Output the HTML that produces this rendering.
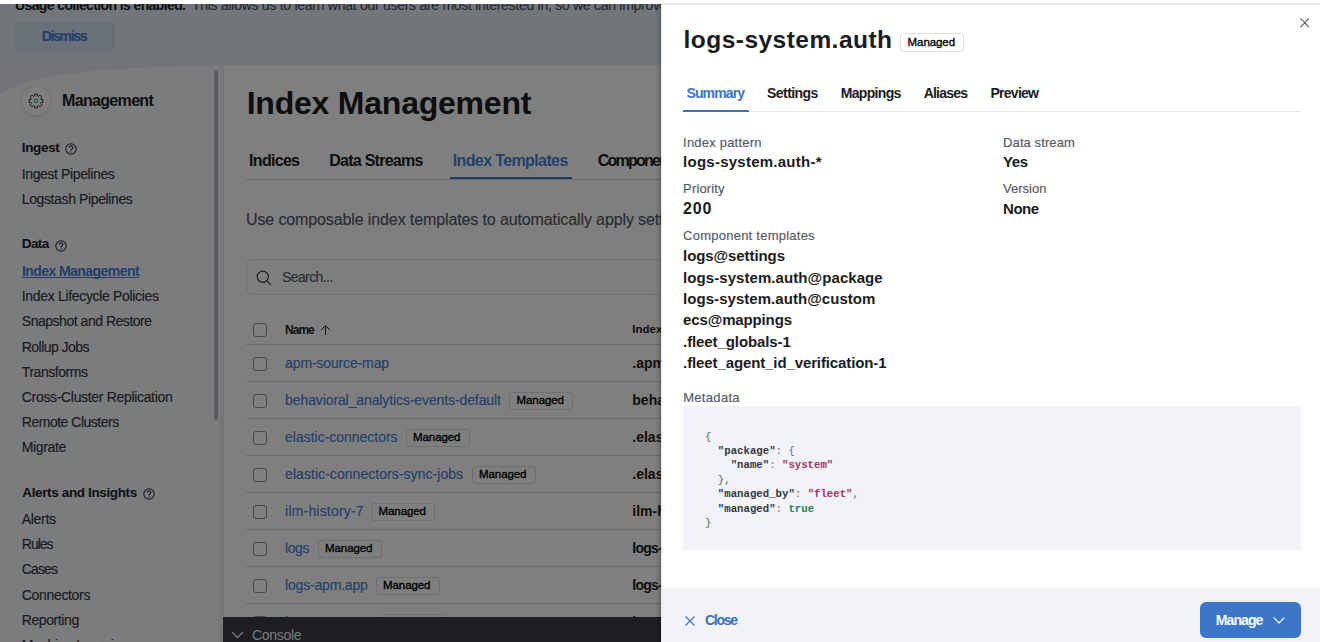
<!DOCTYPE html>
<html><head><meta charset="utf-8"><title>Index Management</title>
<style>
html,body{margin:0;padding:0;width:1320px;height:642px;overflow:hidden;background:#fff;font-family:"Liberation Sans",sans-serif;}
.t{position:absolute;white-space:nowrap;line-height:1;}
.a{position:absolute;}
.cb{position:absolute;left:253px;width:12px;height:12px;border:1px solid #939496;border-radius:3px;background:#fff;}
.bdg{position:absolute;height:16px;border:1px solid #dce0e8;border-radius:3px;background:#fff;box-sizing:content-box;}
.rowl{position:absolute;left:246px;width:1074px;height:1px;background:#d3dae6;}
</style></head><body>
<!-- page under overlay -->
<div class="a" style="left:0;top:4px;width:1320px;height:61px;background:#e4ecf7;"></div>
<div class="a" style="left:14px;top:21.5px;width:101px;height:29px;border-radius:4px;background:#d3e0f2;"></div>
<div class="a" style="left:0;top:65px;width:222px;height:577px;background:#f7f8fc;overflow:hidden;">
  <svg width="222" height="577" style="position:absolute;left:0;top:0"><path d="M0 0 H222 V0 C60 3 20 15 0 30 Z" fill="#e6e9ee"/></svg>
</div>
<div class="a" style="left:214px;top:70px;width:4px;height:350px;border-radius:2px;background:#b6b8bf;"></div>
<div class="a" style="left:217px;top:65px;width:7px;height:577px;background:linear-gradient(to right,rgba(0,0,0,0),rgba(0,0,0,.07));"></div>
<div class="a" style="left:223px;top:65px;width:1097px;height:577px;background:#fff;border-left:1px solid #dfe3ea;"></div>
<div class="a" style="left:22px;top:87px;width:28px;height:28px;border-radius:50%;background:#fff;box-shadow:0 1px 4px rgba(0,0,0,.15);"></div>
<svg class="a" style="left:28px;top:92.8px" width="16" height="16" viewBox="0 0 16 16"><path d="M6.57 3.00 L6.52 1.06 L9.48 1.06 L9.43 3.00 A5.20 5.20 0 0 1 10.52 3.45 L11.87 2.05 L13.95 4.13 L12.55 5.48 A5.20 5.20 0 0 1 13.00 6.57 L14.94 6.52 L14.94 9.48 L13.00 9.43 A5.20 5.20 0 0 1 12.55 10.52 L13.95 11.87 L11.87 13.95 L10.52 12.55 A5.20 5.20 0 0 1 9.43 13.00 L9.48 14.94 L6.52 14.94 L6.57 13.00 A5.20 5.20 0 0 1 5.48 12.55 L4.13 13.95 L2.05 11.87 L3.45 10.52 A5.20 5.20 0 0 1 3.00 9.43 L1.06 9.48 L1.06 6.52 L3.00 6.57 A5.20 5.20 0 0 1 3.45 5.48 L2.05 4.13 L4.13 2.05 L5.48 3.45 A5.20 5.20 0 0 1 6.57 3.00 Z" fill="none" stroke="#343741" stroke-width="1" stroke-linejoin="round"/><circle cx="8" cy="8" r="1.8" fill="none" stroke="#2a9d8f" stroke-width="0.9"/></svg>
<svg class="a" style="left:65px;top:142.5px" width="12" height="12" viewBox="0 0 12 12"><circle cx="6" cy="6" r="5.2" fill="none" stroke="#343741" stroke-width="1.1"/><path d="M4.3 4.5a1.7 1.7 0 1 1 2.5 1.5c-.6.3-.8.6-.8 1.2v.4" fill="none" stroke="#343741" stroke-width="1.2"/><circle cx="6" cy="9" r=".7" fill="#343741"/></svg>
<svg class="a" style="left:55.2px;top:239.5px" width="12" height="12" viewBox="0 0 12 12"><circle cx="6" cy="6" r="5.2" fill="none" stroke="#343741" stroke-width="1.1"/><path d="M4.3 4.5a1.7 1.7 0 1 1 2.5 1.5c-.6.3-.8.6-.8 1.2v.4" fill="none" stroke="#343741" stroke-width="1.2"/><circle cx="6" cy="9" r=".7" fill="#343741"/></svg>
<svg class="a" style="left:143px;top:487.6px" width="12" height="12" viewBox="0 0 12 12"><circle cx="6" cy="6" r="5.2" fill="none" stroke="#343741" stroke-width="1.1"/><path d="M4.3 4.5a1.7 1.7 0 1 1 2.5 1.5c-.6.3-.8.6-.8 1.2v.4" fill="none" stroke="#343741" stroke-width="1.2"/><circle cx="6" cy="9" r=".7" fill="#343741"/></svg>
<!-- main content -->
<div class="a" style="left:246px;top:179px;width:1074px;height:1px;background:#d3dae6;"></div>
<div class="a" style="left:449.5px;top:177px;width:122.5px;height:2px;background:#3d72c4;"></div>
<div class="a" style="left:246px;top:259px;width:1074px;height:36px;box-sizing:border-box;border:1px solid #dde2ea;border-radius:6px;background:#fbfcfd;"></div>
<svg class="a" style="left:255.5px;top:269.5px" width="16" height="16" viewBox="0 0 16 16"><circle cx="6.8" cy="6.8" r="5.6" fill="none" stroke="#343741" stroke-width="1.2"/><path d="M10.8 10.8l4 4" stroke="#343741" stroke-width="1.2"/></svg>
<svg class="a" style="left:319.8px;top:325px" width="11" height="10" viewBox="0 0 11 10"><path d="M5.5 10V.8M.9 5.2L5.5.6l4.6 4.6" fill="none" stroke="#1a1c21" stroke-width="1"/></svg>
<div class="cb" style="top:323px"></div>
<div class="rowl" style="top:344px"></div>
<div class="cb" style="top:356.5px"></div><div class="rowl" style="top:381px"></div>
<div class="cb" style="top:393.5px"></div><div class="rowl" style="top:418px"></div>
<div class="cb" style="top:430.5px"></div><div class="rowl" style="top:455px"></div>
<div class="cb" style="top:467.5px"></div><div class="rowl" style="top:492px"></div>
<div class="cb" style="top:504.5px"></div><div class="rowl" style="top:529px"></div>
<div class="cb" style="top:541.5px"></div><div class="rowl" style="top:566px"></div>
<div class="cb" style="top:578.5px"></div><div class="rowl" style="top:603px"></div>
<div class="cb" style="top:615.5px"></div>
<div class="bdg" style="left:509px;top:392px;width:62px;"></div>
<div class="bdg" style="left:405.5px;top:429px;width:62px;"></div>
<div class="bdg" style="left:471.5px;top:466px;width:62px;"></div>
<div class="bdg" style="left:371px;top:503px;width:62px;"></div>
<div class="bdg" style="left:317.5px;top:540px;width:62px;"></div>
<div class="bdg" style="left:375.5px;top:577px;width:62px;"></div>
<div class="bdg" style="left:382px;top:613.5px;width:62px;"></div>
<span id="t0" class="t" style="left:15.00px;top:-1.65px;font-size:14px;color:#1a1c21;font-weight:700;letter-spacing:-0.612px;">Usage collection is enabled.</span>
<span id="t1" class="t" style="left:192.00px;top:-1.65px;font-size:14px;color:#4a4f5a;-webkit-text-stroke:0.15px currentColor;letter-spacing:-0.275px;">This allows us to learn what our users are most interested in, so we can improve our products</span>
<span id="t2" class="t" style="left:41.70px;top:28.85px;font-size:14px;color:#467dd6;-webkit-text-stroke:0.15px currentColor;letter-spacing:-1.301px;font-weight:600;">Dismiss</span>
<span id="t3" class="t" style="left:62.00px;top:92.85px;font-size:16px;color:#1a1c21;font-weight:700;letter-spacing:-0.666px;">Management</span>
<span id="t4" class="t" style="left:21.80px;top:140.77px;font-size:13.5px;color:#1a1c21;font-weight:700;letter-spacing:-0.353px;">Ingest</span>
<span id="t5" class="t" style="left:21.80px;top:167.05px;font-size:14px;color:#343741;-webkit-text-stroke:0.15px currentColor;letter-spacing:-0.390px;">Ingest Pipelines</span>
<span id="t6" class="t" style="left:21.80px;top:192.35px;font-size:14px;color:#343741;-webkit-text-stroke:0.15px currentColor;letter-spacing:-0.384px;">Logstash Pipelines</span>
<span id="t7" class="t" style="left:21.80px;top:237.07px;font-size:13.5px;color:#1a1c21;font-weight:700;letter-spacing:-0.622px;">Data</span>
<span id="t8" class="t" style="left:21.90px;top:264.05px;font-size:14px;color:#467dd6;font-weight:700;letter-spacing:-0.555px;text-decoration:underline;text-underline-offset:1px;text-decoration-skip-ink:none;">Index Management</span>
<span id="t9" class="t" style="left:21.80px;top:289.05px;font-size:14px;color:#343741;-webkit-text-stroke:0.15px currentColor;letter-spacing:-0.328px;">Index Lifecycle Policies</span>
<span id="t10" class="t" style="left:21.80px;top:314.15px;font-size:14px;color:#343741;-webkit-text-stroke:0.15px currentColor;letter-spacing:-0.475px;">Snapshot and Restore</span>
<span id="t11" class="t" style="left:21.80px;top:339.55px;font-size:14px;color:#343741;-webkit-text-stroke:0.15px currentColor;letter-spacing:-0.536px;">Rollup Jobs</span>
<span id="t12" class="t" style="left:21.80px;top:364.65px;font-size:14px;color:#343741;-webkit-text-stroke:0.15px currentColor;letter-spacing:-0.453px;">Transforms</span>
<span id="t13" class="t" style="left:21.80px;top:389.95px;font-size:14px;color:#343741;-webkit-text-stroke:0.15px currentColor;letter-spacing:-0.326px;">Cross-Cluster Replication</span>
<span id="t14" class="t" style="left:21.80px;top:415.05px;font-size:14px;color:#343741;-webkit-text-stroke:0.15px currentColor;letter-spacing:-0.490px;">Remote Clusters</span>
<span id="t15" class="t" style="left:21.80px;top:439.95px;font-size:14px;color:#343741;-webkit-text-stroke:0.15px currentColor;letter-spacing:-0.381px;">Migrate</span>
<span id="t16" class="t" style="left:22.30px;top:485.67px;font-size:13.5px;color:#1a1c21;font-weight:700;letter-spacing:-0.368px;">Alerts and Insights</span>
<span id="t17" class="t" style="left:21.80px;top:512.05px;font-size:14px;color:#343741;-webkit-text-stroke:0.15px currentColor;letter-spacing:-0.319px;">Alerts</span>
<span id="t18" class="t" style="left:21.80px;top:537.25px;font-size:14px;color:#343741;-webkit-text-stroke:0.15px currentColor;letter-spacing:-1.024px;">Rules</span>
<span id="t19" class="t" style="left:21.80px;top:562.45px;font-size:14px;color:#343741;-webkit-text-stroke:0.15px currentColor;letter-spacing:-0.897px;">Cases</span>
<span id="t20" class="t" style="left:21.80px;top:587.95px;font-size:14px;color:#343741;-webkit-text-stroke:0.15px currentColor;letter-spacing:-0.333px;">Connectors</span>
<span id="t21" class="t" style="left:21.80px;top:613.15px;font-size:14px;color:#343741;-webkit-text-stroke:0.15px currentColor;letter-spacing:-0.413px;">Reporting</span>
<span id="t22" class="t" style="left:21.80px;top:638.35px;font-size:14px;color:#343741;-webkit-text-stroke:0.15px currentColor;letter-spacing:-0.286px;">Machine Learning</span>
<span id="t23" class="t" style="left:246.70px;top:87.41px;font-size:32px;color:#1a1c21;font-weight:700;letter-spacing:-0.224px;">Index Management</span>
<span id="t24" class="t" style="left:249.10px;top:153.15px;font-size:16px;color:#1a1c21;font-weight:700;letter-spacing:-0.707px;">Indices</span>
<span id="t25" class="t" style="left:329.20px;top:153.15px;font-size:16px;color:#1a1c21;font-weight:700;letter-spacing:-0.735px;">Data Streams</span>
<span id="t26" class="t" style="left:452.70px;top:153.15px;font-size:16px;color:#467dd6;font-weight:700;letter-spacing:-0.613px;">Index Templates</span>
<span id="t27" class="t" style="left:597.70px;top:153.15px;font-size:16px;color:#1a1c21;font-weight:700;letter-spacing:-1.747px;">Component Templates</span>
<span id="t28" class="t" style="left:246.00px;top:211.75px;font-size:16px;color:#535966;-webkit-text-stroke:0.15px currentColor;letter-spacing:-0.117px;">Use composable index templates to automatically apply settings, mappings, and aliases to indices.</span>
<span id="t29" class="t" style="left:282.00px;top:270.25px;font-size:14px;color:#535966;-webkit-text-stroke:0.15px currentColor;letter-spacing:-0.604px;">Search...</span>
<span id="t30" class="t" style="left:285.10px;top:323.64px;font-size:12px;color:#1a1c21;font-weight:700;letter-spacing:-1.029px;">Name</span>
<span id="t31" class="t" style="left:632.30px;top:323.86px;font-size:11.5px;color:#1a1c21;font-weight:700;">Index patterns</span>
<span id="t32" class="t" style="left:285.10px;top:355.95px;font-size:14px;color:#467dd6;-webkit-text-stroke:0.15px currentColor;letter-spacing:-0.141px;">apm-source-map</span>
<span id="t33" class="t" style="left:632.30px;top:355.95px;font-size:14px;color:#1a1c21;font-weight:700;">.apm-source-map</span>
<span id="t34" class="t" style="left:285.10px;top:392.95px;font-size:14px;color:#467dd6;-webkit-text-stroke:0.15px currentColor;letter-spacing:-0.108px;">behavioral_analytics-events-default</span>
<span id="t35" class="t" style="left:632.30px;top:392.95px;font-size:14px;color:#1a1c21;font-weight:700;">behavioral_analytics-events-*</span>
<span id="t36" class="t" style="left:285.10px;top:429.95px;font-size:14px;color:#467dd6;-webkit-text-stroke:0.15px currentColor;letter-spacing:-0.019px;">elastic-connectors</span>
<span id="t37" class="t" style="left:632.30px;top:429.95px;font-size:14px;color:#1a1c21;font-weight:700;">.elastic-connectors-v1</span>
<span id="t38" class="t" style="left:285.10px;top:466.95px;font-size:14px;color:#467dd6;-webkit-text-stroke:0.15px currentColor;letter-spacing:0.051px;">elastic-connectors-sync-jobs</span>
<span id="t39" class="t" style="left:632.30px;top:466.95px;font-size:14px;color:#1a1c21;font-weight:700;">.elastic-connectors-sync-jobs-v1</span>
<span id="t40" class="t" style="left:285.10px;top:503.95px;font-size:14px;color:#467dd6;-webkit-text-stroke:0.15px currentColor;letter-spacing:0.189px;">ilm-history-7</span>
<span id="t41" class="t" style="left:632.30px;top:503.95px;font-size:14px;color:#1a1c21;font-weight:700;">ilm-history-7*</span>
<span id="t42" class="t" style="left:285.10px;top:540.95px;font-size:14px;color:#467dd6;-webkit-text-stroke:0.15px currentColor;letter-spacing:-0.462px;">logs</span>
<span id="t43" class="t" style="left:632.30px;top:540.95px;font-size:14px;color:#1a1c21;font-weight:700;letter-spacing:-0.738px;">logs-*-*</span>
<span id="t44" class="t" style="left:285.10px;top:577.95px;font-size:14px;color:#467dd6;-webkit-text-stroke:0.15px currentColor;letter-spacing:-0.193px;">logs-apm.app</span>
<span id="t45" class="t" style="left:632.30px;top:577.95px;font-size:14px;color:#1a1c21;font-weight:700;letter-spacing:-0.738px;">logs-apm.app-*</span>
<span id="t46" class="t" style="left:285.10px;top:614.95px;font-size:14px;color:#467dd6;-webkit-text-stroke:0.15px currentColor;">logs-apm.error</span>
<span id="t47" class="t" style="left:632.30px;top:614.95px;font-size:14px;color:#1a1c21;font-weight:700;letter-spacing:-0.738px;">logs-apm.error-*</span>
<span id="t48" class="t" style="left:516.50px;top:394.96px;font-size:11.5px;color:#000;-webkit-text-stroke:0.15px currentColor;letter-spacing:-0.078px;-webkit-text-stroke:0.35px #000;">Managed</span>
<span id="t49" class="t" style="left:413.00px;top:431.96px;font-size:11.5px;color:#000;-webkit-text-stroke:0.15px currentColor;letter-spacing:-0.078px;-webkit-text-stroke:0.35px #000;">Managed</span>
<span id="t50" class="t" style="left:479.00px;top:468.96px;font-size:11.5px;color:#000;-webkit-text-stroke:0.15px currentColor;letter-spacing:-0.078px;-webkit-text-stroke:0.35px #000;">Managed</span>
<span id="t51" class="t" style="left:378.50px;top:505.96px;font-size:11.5px;color:#000;-webkit-text-stroke:0.15px currentColor;letter-spacing:-0.078px;-webkit-text-stroke:0.35px #000;">Managed</span>
<span id="t52" class="t" style="left:325.00px;top:542.96px;font-size:11.5px;color:#000;-webkit-text-stroke:0.15px currentColor;letter-spacing:-0.078px;-webkit-text-stroke:0.35px #000;">Managed</span>
<span id="t53" class="t" style="left:383.00px;top:579.96px;font-size:11.5px;color:#000;-webkit-text-stroke:0.15px currentColor;letter-spacing:-0.078px;-webkit-text-stroke:0.35px #000;">Managed</span>
<span id="t54" class="t" style="left:389.50px;top:616.96px;font-size:11.5px;color:#000;-webkit-text-stroke:0.15px currentColor;letter-spacing:-0.078px;-webkit-text-stroke:0.35px #000;">Managed</span>
<!-- console -->
<div class="a" style="left:223px;top:617px;width:1097px;height:25px;background:#3a3c46;"></div>
<svg class="a" style="left:231px;top:631px" width="13" height="8" viewBox="0 0 13 8"><path d="M1 1l5.5 5.5L12 1" fill="none" stroke="#f0f2f5" stroke-width="1.3"/></svg>
<span class="t" style="left:252px;top:627.6px;font-size:14px;color:#f0f2f5;letter-spacing:-0.3px;">Console</span>

<!-- overlay -->
<div class="a" style="left:0;top:4px;width:1320px;height:638px;background:rgba(0,0,0,.5);"></div>
<!-- flyout -->
<div class="a" style="left:0;top:0;width:1320px;height:4px;background:#fff;"></div>

<div class="a" style="left:655px;top:4px;width:6px;height:638px;background:linear-gradient(to right,rgba(0,0,0,0),rgba(0,0,0,.07) 50%,rgba(0,0,0,.2));"></div>
<div class="a" style="left:661px;top:4px;width:659px;height:638px;background:#fff;border-left:1px solid #e6e8ec;box-sizing:border-box;"></div>
<div class="a" style="left:661px;top:3px;width:659px;height:2px;background:#e3e6ec;"></div>
<div class="a" style="left:662px;top:588px;width:658px;height:54px;background:#f1f3f7;"></div>
<svg class="a" style="left:1300px;top:18px" width="9.5" height="9.5" viewBox="0 0 10 10"><path d="M.5.5l9 9M9.5.5l-9 9" stroke="#4a4f5a" stroke-width="1.1"/></svg>
<div class="bdg" style="left:900px;top:33px;width:62px;height:17px;"></div>
<div class="a" style="left:683px;top:111px;width:618px;height:1px;background:#dfe4ec;"></div>
<div class="a" style="left:683px;top:110px;width:66px;height:2px;background:#3d72c4;"></div>
<div class="a" style="left:683px;top:406px;width:618px;height:144px;background:#f1f3f7;"></div>
<div class="a" style="left:1200px;top:602px;width:101px;height:36px;border-radius:6px;background:#3d76c9;"></div>
<svg class="a" style="left:1272.5px;top:617px" width="12" height="7" viewBox="0 0 12 7"><path d="M.7.7l5.3 5.3 5.3-5.3" fill="none" stroke="#fff" stroke-width="1.2"/></svg>
<svg class="a" style="left:685px;top:615.5px" width="10" height="10" viewBox="0 0 10 10"><path d="M.5.5l9 9M9.5.5l-9 9" stroke="#3a6fc0" stroke-width="1.1"/></svg>
<pre class="a" style="left:705px;top:429.5px;margin:0;font-family:'Liberation Mono',monospace;font-size:10.7px;line-height:14.43px;color:#343741;font-weight:700;"><span style="font-weight:400;color:#5f6673">{</span>
  "package"<span style="font-weight:400;color:#5f6673">: {</span>
    "name"<span style="font-weight:400;color:#5f6673">: </span><span style="color:#a2335f">"system"</span>
  <span style="font-weight:400;color:#5f6673">},</span>
  "managed_by"<span style="font-weight:400;color:#5f6673">: </span><span style="color:#a2335f">"fleet"</span><span style="font-weight:400;color:#5f6673">,</span>
  "managed"<span style="font-weight:400;color:#5f6673">: </span><span style="color:#2f7a59">true</span>
<span style="font-weight:400;color:#5f6673">}</span></pre>
<span id="t55" class="t" style="left:683.60px;top:28.26px;font-size:24.5px;color:#1a1c21;font-weight:700;letter-spacing:0.460px;">logs-system.auth</span>
<span id="t56" class="t" style="left:907.60px;top:36.76px;font-size:11.5px;color:#000;-webkit-text-stroke:0.15px currentColor;letter-spacing:-0.078px;-webkit-text-stroke:0.35px #000;">Managed</span>
<span id="t57" class="t" style="left:686.50px;top:86.15px;font-size:14px;color:#3d72c4;font-weight:700;letter-spacing:-0.885px;">Summary</span>
<span id="t58" class="t" style="left:767.00px;top:86.15px;font-size:14px;color:#1a1c21;font-weight:700;letter-spacing:-0.548px;">Settings</span>
<span id="t59" class="t" style="left:840.80px;top:86.15px;font-size:14px;color:#1a1c21;font-weight:700;letter-spacing:-0.692px;">Mappings</span>
<span id="t60" class="t" style="left:923.70px;top:86.15px;font-size:14px;color:#1a1c21;font-weight:700;letter-spacing:-0.791px;">Aliases</span>
<span id="t61" class="t" style="left:990.50px;top:86.15px;font-size:14px;color:#1a1c21;font-weight:700;letter-spacing:-0.740px;">Preview</span>
<span id="t62" class="t" style="left:683.10px;top:135.79px;font-size:13px;color:#535966;-webkit-text-stroke:0.15px currentColor;letter-spacing:0.201px;">Index pattern</span>
<span id="t63" class="t" style="left:683.10px;top:154.10px;font-size:15px;color:#1a1c21;font-weight:700;letter-spacing:0.247px;">logs-system.auth-*</span>
<span id="t64" class="t" style="left:683.10px;top:182.49px;font-size:13px;color:#535966;-webkit-text-stroke:0.15px currentColor;letter-spacing:0.150px;">Priority</span>
<span id="t65" class="t" style="left:683.10px;top:201.25px;font-size:16px;color:#1a1c21;font-weight:700;letter-spacing:0.748px;">200</span>
<span id="t66" class="t" style="left:1003.10px;top:135.79px;font-size:13px;color:#535966;-webkit-text-stroke:0.15px currentColor;letter-spacing:0.089px;">Data stream</span>
<span id="t67" class="t" style="left:1003.10px;top:154.10px;font-size:15px;color:#1a1c21;font-weight:700;letter-spacing:-0.438px;">Yes</span>
<span id="t68" class="t" style="left:1003.10px;top:182.49px;font-size:13px;color:#535966;-webkit-text-stroke:0.15px currentColor;letter-spacing:-0.013px;">Version</span>
<span id="t69" class="t" style="left:1003.10px;top:201.10px;font-size:15px;color:#1a1c21;font-weight:700;letter-spacing:-0.500px;">None</span>
<span id="t70" class="t" style="left:683.10px;top:229.19px;font-size:13px;color:#535966;-webkit-text-stroke:0.15px currentColor;letter-spacing:0.240px;">Component templates</span>
<span id="t71" class="t" style="left:683.10px;top:247.80px;font-size:15px;color:#1a1c21;font-weight:700;letter-spacing:-0.090px;">logs@settings</span>
<span id="t72" class="t" style="left:683.10px;top:269.60px;font-size:15px;color:#1a1c21;font-weight:700;letter-spacing:0.068px;">logs-system.auth@package</span>
<span id="t73" class="t" style="left:683.10px;top:290.60px;font-size:15px;color:#1a1c21;font-weight:700;letter-spacing:0.043px;">logs-system.auth@custom</span>
<span id="t74" class="t" style="left:683.10px;top:311.60px;font-size:15px;color:#1a1c21;font-weight:700;letter-spacing:-0.145px;">ecs@mappings</span>
<span id="t75" class="t" style="left:683.10px;top:333.80px;font-size:15px;color:#1a1c21;font-weight:700;letter-spacing:-0.100px;">.fleet_globals-1</span>
<span id="t76" class="t" style="left:683.10px;top:354.90px;font-size:15px;color:#1a1c21;font-weight:700;letter-spacing:-0.112px;">.fleet_agent_id_verification-1</span>
<span id="t77" class="t" style="left:683.20px;top:390.89px;font-size:13px;color:#535966;-webkit-text-stroke:0.15px currentColor;letter-spacing:0.314px;">Metadata</span>
<span id="t78" class="t" style="left:704.90px;top:613.05px;font-size:14px;color:#3a6fc0;font-weight:700;letter-spacing:-1.256px;">Close</span>
<span id="t79" class="t" style="left:1215.80px;top:613.15px;font-size:14px;color:#ffffff;font-weight:700;letter-spacing:-0.905px;">Manage</span>
</body></html>
